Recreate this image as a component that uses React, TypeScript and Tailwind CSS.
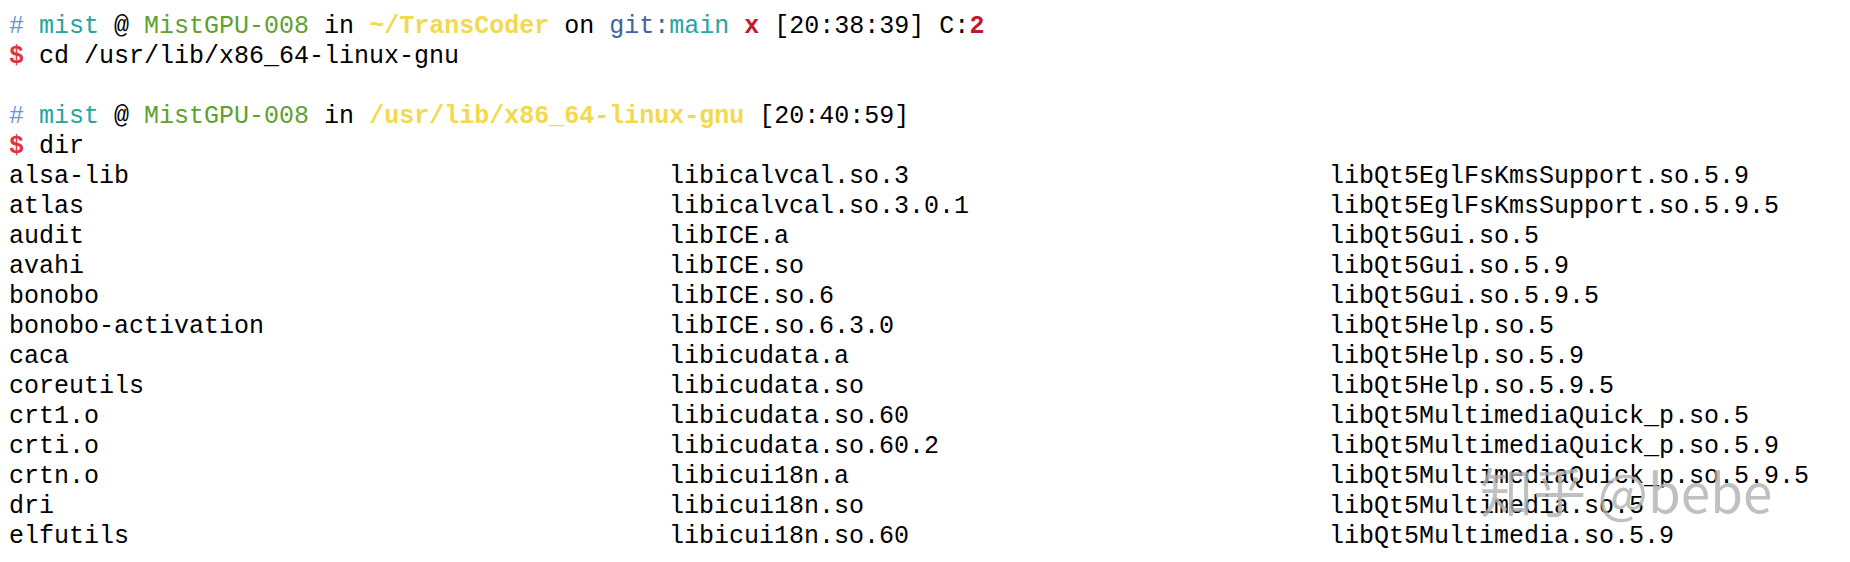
import React from 'react';

const col1 = [
  'alsa-lib',
  'atlas',
  'audit',
  'avahi',
  'bonobo',
  'bonobo-activation',
  'caca',
  'coreutils',
  'crt1.o',
  'crti.o',
  'crtn.o',
  'dri',
  'elfutils',
];

const col2 = [
  'libicalvcal.so.3',
  'libicalvcal.so.3.0.1',
  'libICE.a',
  'libICE.so',
  'libICE.so.6',
  'libICE.so.6.3.0',
  'libicudata.a',
  'libicudata.so',
  'libicudata.so.60',
  'libicudata.so.60.2',
  'libicui18n.a',
  'libicui18n.so',
  'libicui18n.so.60',
];

const col3 = [
  'libQt5EglFsKmsSupport.so.5.9',
  'libQt5EglFsKmsSupport.so.5.9.5',
  'libQt5Gui.so.5',
  'libQt5Gui.so.5.9',
  'libQt5Gui.so.5.9.5',
  'libQt5Help.so.5',
  'libQt5Help.so.5.9',
  'libQt5Help.so.5.9.5',
  'libQt5MultimediaQuick_p.so.5',
  'libQt5MultimediaQuick_p.so.5.9',
  'libQt5MultimediaQuick_p.so.5.9.5',
  'libQt5Multimedia.so.5',
  'libQt5Multimedia.so.5.9',
];

function Prompt({ path, git, time, code }: { path: string; git?: boolean; time: string; code?: string }) {
  return (
    <div className="whitespace-pre">
      <span className="text-[#6b93d6]">#</span>{' '}
      <span className="text-[#27a3a0]">mist</span> @{' '}
      <span className="text-[#5ea12f]">MistGPU-008</span> in{' '}
      <span className="font-bold text-[#f2d94e]">{path}</span>
      {git && (
        <>
          {' '}on <span className="text-[#3f63a5]">git:</span>
          <span className="text-[#27a3a0]">main</span>{' '}
          <span className="font-bold text-[#c01b2c]">x</span>
        </>
      )}{' '}
      [{time}]
      {code && (
        <>
          {' '}C:<span className="font-bold text-[#c01b2c]">{code}</span>
        </>
      )}
    </div>
  );
}

function Command({ cmd }: { cmd: string }) {
  return (
    <div className="whitespace-pre">
      <span className="font-bold text-[#e0353d]">$</span> {cmd}
    </div>
  );
}

export default function App() {
  return (
    <div className="relative h-[562px] w-[1850px] overflow-hidden bg-white pl-[9px] pt-[12px] font-['Liberation_Mono','Courier_New',monospace] text-[25px] leading-[30px] text-black">
      <Prompt path="~/TransCoder" git time="20:38:39" code="2" />
      <Command cmd="cd /usr/lib/x86_64-linux-gnu" />
      <div className="h-[30px]" />
      <Prompt path="/usr/lib/x86_64-linux-gnu" time="20:40:59" />
      <Command cmd="dir" />
      <div className="grid grid-cols-[660px_660px_1fr]">
        {[col1, col2, col3].map((col, i) => (
          <div key={i} className="flex flex-col">
            {col.map((name) => (
              <div key={name} className="whitespace-pre">
                {name}
              </div>
            ))}
          </div>
        ))}
      </div>
      <div className="pointer-events-none absolute left-[1480px] top-[460px] whitespace-pre font-['Noto_Sans_CJK_SC','Noto_Sans',sans-serif] text-[53px] leading-[60px] text-[#b0b0b0]/80">
        知乎 @bebe
      </div>
    </div>
  );
}
